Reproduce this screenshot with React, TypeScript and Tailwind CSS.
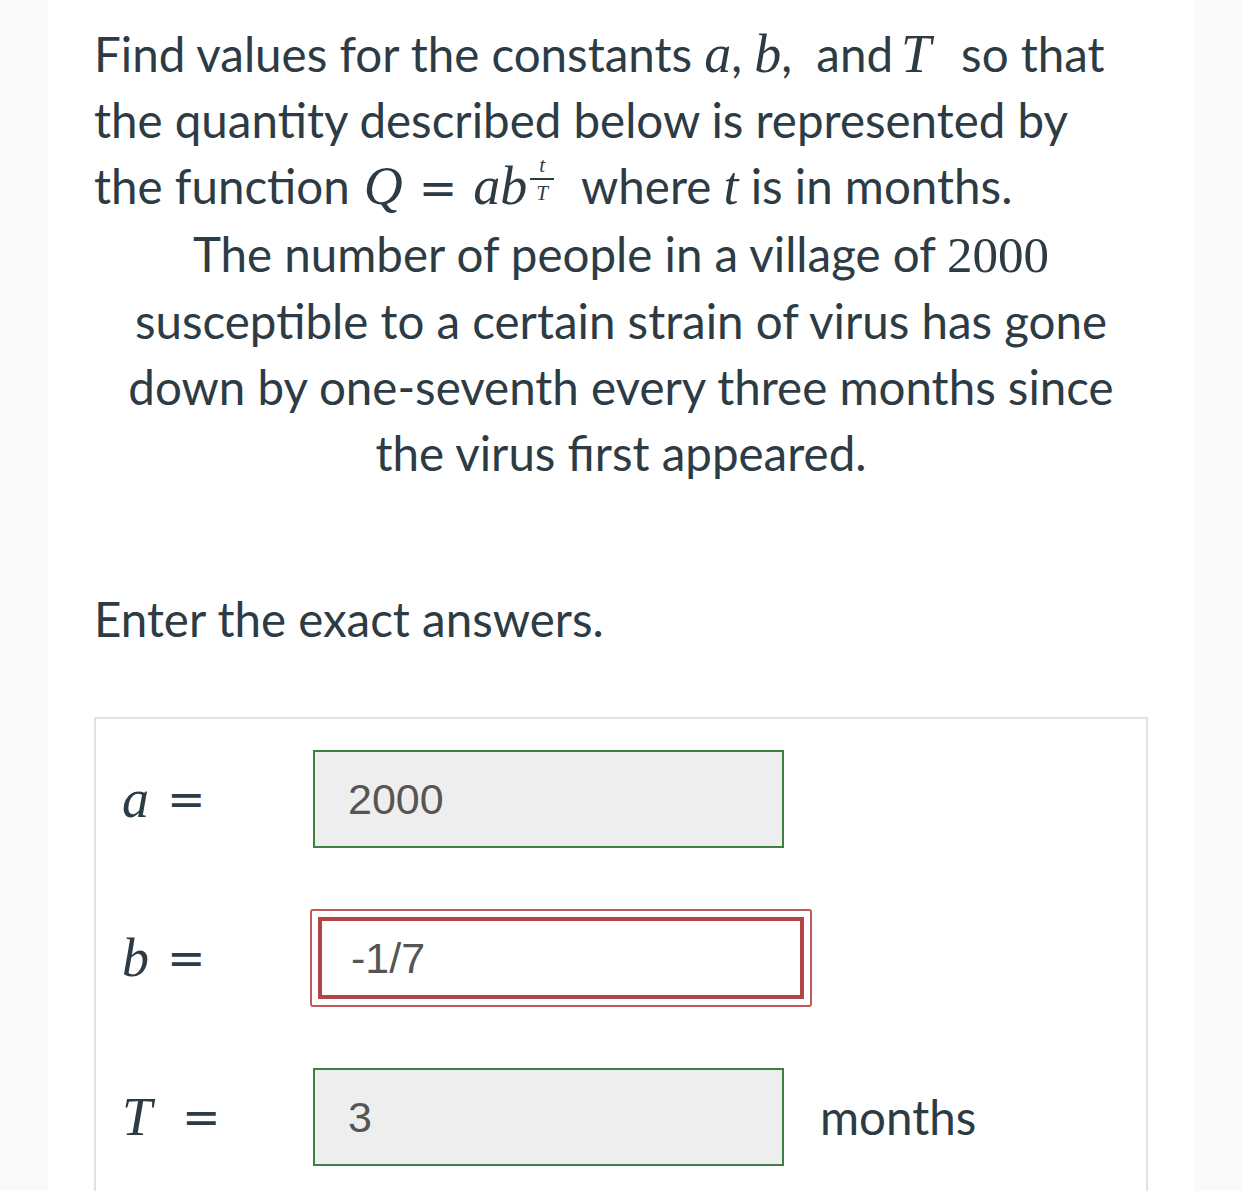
import React from 'react';

const serif = { fontFamily: '"Liberation Serif", "DejaVu Serif", serif' };
const eqFont = { fontFamily: '"DejaVu Serif", "Liberation Serif", serif' };

const M = ({ children }: { children: React.ReactNode }) => (
  <span className="italic text-[54px]" style={serif}>{children}</span>
);

const App: React.FC = () => {
  return (
    <div className="min-h-screen bg-[#fafafa] flex justify-center" style={{ fontFamily: 'Lato, "Open Sans", sans-serif' }}>
      <div className="w-[1146px] bg-white px-[46px] pt-[21px] text-[#2d3b45]">
        {/* Question */}
        <div className="text-[47.5px] leading-[66px]">
          <p>
            Find values for the constants <M>a</M>, <M>b</M>,&nbsp;&nbsp;and<span className="ml-[8px]"><M>T</M></span>
            <span className="ml-[30px]">so that</span>
            <br />
            the quantity described below is represented by
            <br />
            the function<span className="ml-[14px]"><M>Q</M></span>
            <span className="text-[46px] mx-[16px]" style={eqFont}>=</span>
            <M>ab</M>
            <span className="inline-flex flex-col items-center align-[32px] leading-none mx-[3px]" style={serif}>
              <span className="italic text-[21px] pb-[2px]">t</span>
              <span className="border-t-[2px] border-[#2d3b45] italic text-[21px] px-[6px] pt-[3px]">T</span>
            </span>
            <span className="ml-[24px]">where</span> <M>t</M> is in months.
          </p>
          <p className="text-center">
            The number of people in a village of <span className="text-[51px]" style={serif}>2000</span>
            <br />
            susceptible to a certain strain of virus has gone
            <br />
            down by one-seventh every three months since
            <br />
            the virus first appeared.
          </p>
        </div>

        <p className="text-[47.5px] leading-[66px] mt-[100px]">Enter the exact answers.</p>

        {/* Answer box */}
        <div className="mt-[65px] border-2 border-b-0 border-[#e3e3e3] h-[480px] pl-[26px] pt-[31px]">
          <div className="flex items-center h-[98px]">
            <div className="w-[191px] flex items-center">
              <span className="italic text-[54px]" style={serif}>a</span>
              <span className="ml-[18px] text-[46px]" style={eqFont}>=</span>
            </div>
            <div className="w-[471px] h-[98px] border-2 border-[#3f7f3f] bg-[#eeeeee] flex items-center pl-[33px] text-[43px] text-[#555555]" style={{ fontFamily: '"Liberation Sans", Arial, sans-serif' }}>
              2000
            </div>
          </div>

          <div className="flex items-center h-[98px] mt-[61px]">
            <div className="w-[188px] flex items-center">
              <span className="italic text-[54px]" style={serif}>b</span>
              <span className="ml-[18px] text-[46px]" style={eqFont}>=</span>
            </div>
            <div className="w-[502px] h-[98px] border-2 border-[#c05a5a] rounded-[3px] p-[6px]">
              <div className="w-full h-full border-[4px] border-[#b04545] bg-white flex items-center pl-[29px] text-[43px] text-[#555555]" style={{ fontFamily: '"Liberation Sans", Arial, sans-serif' }}>
                -1/7
              </div>
            </div>
          </div>

          <div className="flex items-center h-[98px] mt-[61px]">
            <div className="w-[191px] flex items-center">
              <span className="italic text-[54px]" style={serif}>T</span>
              <span className="ml-[30px] text-[46px]" style={eqFont}>=</span>
            </div>
            <div className="w-[471px] h-[98px] border-2 border-[#3f7f3f] bg-[#eeeeee] flex items-center pl-[33px] text-[43px] text-[#555555]" style={{ fontFamily: '"Liberation Sans", Arial, sans-serif' }}>
              3
            </div>
            <span className="ml-[36px] text-[47.5px]">months</span>
          </div>
        </div>
      </div>
    </div>
  );
};

export default App;
